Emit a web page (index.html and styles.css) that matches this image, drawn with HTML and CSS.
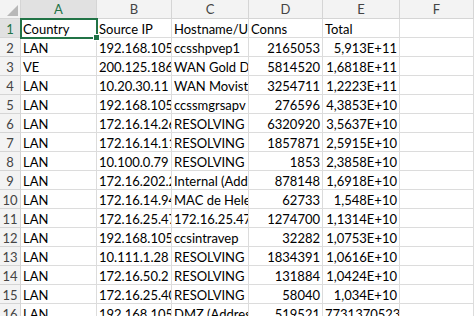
FILE: index.html
```
<!DOCTYPE html>
<html lang="en">

<head>
	<meta charset="utf-8">
	<title>Sheet1</title>
	<link rel="stylesheet" href="styles.css">
</head>

<body>
	<div class="sheet">
		<div class="corner">
			<svg viewBox="0 0 21 19" width="21" height="19"><path d="M18,5V16H7z" fill="#b8b8b8"></path></svg>
		</div>
		<div class="colhead sel">A</div>
		<div class="colhead">B</div>
		<div class="colhead">C</div>
		<div class="colhead">D</div>
		<div class="colhead">E</div>
		<div class="colhead">F</div>

		<div class="rowhead sel">1</div>
		<div class="cell active">Country</div>
		<div class="cell">Source IP</div>
		<div class="cell">Hostname/Username</div>
		<div class="cell">Conns</div>
		<div class="cell">Total</div>
		<div class="cell"></div>

		<div class="rowhead">2</div>
		<div class="cell">LAN</div>
		<div class="cell">192.168.105.11</div>
		<div class="cell">ccsshpvep1</div>
		<div class="cell num">2165053</div>
		<div class="cell num">5,913E+11</div>
		<div class="cell"></div>

		<div class="rowhead">3</div>
		<div class="cell">VE</div>
		<div class="cell">200.125.186.10</div>
		<div class="cell">WAN Gold Data</div>
		<div class="cell num">5814520</div>
		<div class="cell num">1,6818E+11</div>
		<div class="cell"></div>

		<div class="rowhead">4</div>
		<div class="cell">LAN</div>
		<div class="cell">10.20.30.11</div>
		<div class="cell">WAN Movistar</div>
		<div class="cell num">3254711</div>
		<div class="cell num">1,2223E+11</div>
		<div class="cell"></div>

		<div class="rowhead">5</div>
		<div class="cell">LAN</div>
		<div class="cell">192.168.105.75</div>
		<div class="cell">ccssmgrsapv</div>
		<div class="cell num">276596</div>
		<div class="cell num">4,3853E+10</div>
		<div class="cell"></div>

		<div class="rowhead">6</div>
		<div class="cell">LAN</div>
		<div class="cell">172.16.14.26</div>
		<div class="cell">RESOLVING</div>
		<div class="cell num">6320920</div>
		<div class="cell num">3,5637E+10</div>
		<div class="cell"></div>

		<div class="rowhead">7</div>
		<div class="cell">LAN</div>
		<div class="cell">172.16.14.110</div>
		<div class="cell">RESOLVING</div>
		<div class="cell num">1857871</div>
		<div class="cell num">2,5915E+10</div>
		<div class="cell"></div>

		<div class="rowhead">8</div>
		<div class="cell">LAN</div>
		<div class="cell">10.100.0.79</div>
		<div class="cell">RESOLVING</div>
		<div class="cell num">1853</div>
		<div class="cell num">2,3858E+10</div>
		<div class="cell"></div>

		<div class="rowhead">9</div>
		<div class="cell">LAN</div>
		<div class="cell">172.16.202.2</div>
		<div class="cell">Internal (Address)</div>
		<div class="cell num">878148</div>
		<div class="cell num">1,6918E+10</div>
		<div class="cell"></div>

		<div class="rowhead">10</div>
		<div class="cell">LAN</div>
		<div class="cell">172.16.14.94</div>
		<div class="cell">MAC de Helena</div>
		<div class="cell num">62733</div>
		<div class="cell num">1,548E+10</div>
		<div class="cell"></div>

		<div class="rowhead">11</div>
		<div class="cell">LAN</div>
		<div class="cell">172.16.25.47</div>
		<div class="cell">172.16.25.47</div>
		<div class="cell num">1274700</div>
		<div class="cell num">1,1314E+10</div>
		<div class="cell"></div>

		<div class="rowhead">12</div>
		<div class="cell">LAN</div>
		<div class="cell">192.168.105.60</div>
		<div class="cell">ccsintravep</div>
		<div class="cell num">32282</div>
		<div class="cell num">1,0753E+10</div>
		<div class="cell"></div>

		<div class="rowhead">13</div>
		<div class="cell">LAN</div>
		<div class="cell">10.111.1.28</div>
		<div class="cell">RESOLVING</div>
		<div class="cell num">1834391</div>
		<div class="cell num">1,0616E+10</div>
		<div class="cell"></div>

		<div class="rowhead">14</div>
		<div class="cell">LAN</div>
		<div class="cell">172.16.50.2</div>
		<div class="cell">RESOLVING</div>
		<div class="cell num">131884</div>
		<div class="cell num">1,0424E+10</div>
		<div class="cell"></div>

		<div class="rowhead">15</div>
		<div class="cell">LAN</div>
		<div class="cell">172.16.25.40</div>
		<div class="cell">RESOLVING</div>
		<div class="cell num">58040</div>
		<div class="cell num">1,034E+10</div>
		<div class="cell"></div>

		<div class="rowhead">16</div>
		<div class="cell">LAN</div>
		<div class="cell">192.168.105.1</div>
		<div class="cell">DMZ (Address)</div>
		<div class="cell num">519521</div>
		<div class="cell num">7731370523</div>
		<div class="cell"></div>
	</div>
</body>

</html>
```

FILE: styles.css
```
body {
	background-color: #FFFFFF;
	color: #000000;
	font-family: "Lato", "Open Sans", sans-serif;
	height: 316px;
	margin: 0;
	overflow: hidden;
}

.sheet {
	display: grid;
	grid-template-columns: 21px 76px 75px 77px 74px 77px 1fr;
	grid-auto-rows: 19px;
	font-size: 13px;
	line-height: 20px;
}

.corner,
.colhead,
.rowhead {
	background-color: #F3F3F3;
	border-bottom: 1px solid #D5D5D5;
	border-right: 1px solid #D5D5D5;
	color: #444444;
}

.corner svg {
	display: block;
}

.colhead {
	line-height: 19px;
	text-align: center;
}

.rowhead {
	text-align: center;
}

.colhead.sel,
.rowhead.sel {
	background-color: #E1E1E1;
	color: #217346;
}

.cell {
	border-bottom: 1px solid #DCDCDC;
	border-right: 1px solid #DCDCDC;
	overflow: hidden;
	padding: 0 2px;
	white-space: nowrap;
}

.num {
	text-align: right;
}

.active {
	position: relative;
	overflow: visible;
}

.active::after {
	border: 2px solid #217346;
	bottom: -2px;
	content: "";
	left: -1px;
	position: absolute;
	right: -2px;
	top: -1px;
}

.active::before {
	background-color: #217346;
	border: 1px solid #FFFFFF;
	bottom: -4px;
	content: "";
	height: 5px;
	position: absolute;
	right: -4px;
	width: 5px;
	z-index: 1;
}
```
